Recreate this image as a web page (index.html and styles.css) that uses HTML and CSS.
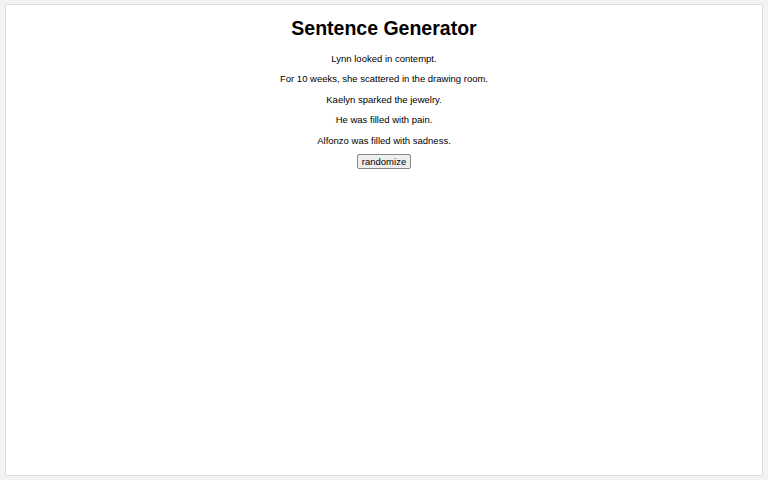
FILE: index.html
```html
<!DOCTYPE html>
<html>
	<head>
		<meta content="text/html;charset=utf-8" http-equiv="Content-Type">
		<link rel="stylesheet" href="styles.css">
	</head>
	<body>
		<div class="wrapper">
			<h1 class="title">Sentence Generator</h1>
			<div id="sentences">
				<p>Lynn looked in contempt.</p>
				<p>For 10 weeks, she scattered in the drawing room.</p>
				<p>Kaelyn sparked the jewelry.</p>
				<p>He was filled with pain.</p>
				<p>Alfonzo was filled with sadness.</p>
			</div>
			<button id="randomize">randomize</button>
		</div>
	</body>
</html>
```

FILE: styles.css
```css
html, body {
	height: 100%;
}
body {
	margin: 0;
	padding: 4px 5px 4px 5px;
	box-sizing: border-box;
	background: #f3f3f3;
	font-family: "Liberation Sans", Arial, sans-serif;
	color: #000;
}
.wrapper {
	height: 100%;
	box-sizing: border-box;
	background: #fff;
	border: 1px solid #ddd;
	text-align: center;
	padding-top: 12px;
}
.title {
	font-size: 19.5px;
	margin: 0 0 9px 0;
}
#sentences p {
	font-size: 9.5px;
	margin: 0;
	line-height: 20.4px;
}
#randomize {
	font-family: "Liberation Sans", Arial, sans-serif;
	font-size: 9.5px;
	margin-top: 3px;
	padding: 1px 4px;
	background: #efefef;
	border: 1px solid #888;
	border-radius: 2px;
}
```
